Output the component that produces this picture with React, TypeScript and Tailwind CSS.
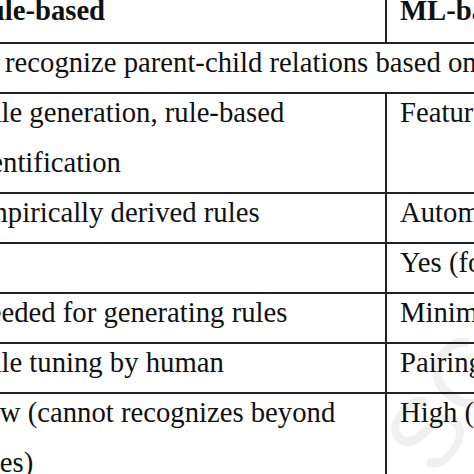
import * as React from "react";

type Row = {
  left?: React.ReactNode;
  right?: string;
  lines?: number;
  span?: string;
  header?: boolean;
};

const rows: Row[] = [
  { left: "Rule-based", right: "ML-based", header: true },
  { span: "To recognize parent-child relations based on features" },
  {
    left: (
      <>
        Rule generation, rule-based
        <br />
        identification
      </>
    ),
    right: "Feature extraction, classification",
    lines: 2,
  },
  { left: "Empirically derived rules", right: "Automatically learned" },
  { left: "", right: "Yes (for training data)" },
  { left: "Needed for generating rules", right: "Minimal" },
  { left: "Rule tuning by human", right: "Pairing data" },
  {
    left: (
      <>
        Low (cannot recognizes beyond
        <br />
        rules)
      </>
    ),
    right: "High (can generalize)",
    lines: 2,
  },
];

export default function App() {
  return (
    <div
      className="relative w-[474px] h-[474px] overflow-hidden bg-white text-[#111]"
      style={{ fontFamily: '"Liberation Serif", "Times New Roman", serif' }}
    >
      {/* faint watermark */}
      <div
        className="pointer-events-none absolute left-[378px] top-[352px] -rotate-[55deg] text-[100px] leading-none text-[#f0f0f0] select-none"
        style={{ fontFamily: '"Liberation Sans", Arial, sans-serif' }}
      >
        SC
      </div>

      <div className="relative -ml-[45px] -mt-[8px] w-[900px] text-[28.7px] leading-[50px]">
        {rows.map((row, idx) => {
          const height = row.lines === 2 ? "h-[100px]" : "h-[50px]";
          const border = idx === 0 ? "" : "border-t-2 border-[#222]";
          if (row.span) {
            return (
              <div key={idx} className={`flex box-border ${height} ${border}`}>
                <div className="pl-[13px] whitespace-nowrap -translate-y-[7px]">
                  {row.span}
                </div>
              </div>
            );
          }
          return (
            <div key={idx} className={`flex box-border ${height} ${border}`}>
              <div
                className={`w-[430px] shrink-0 pl-[13px] -translate-y-[7px] ${
                  row.header ? "font-bold" : ""
                }`}
              >
                {row.left}
              </div>
              <div className="flex-1 border-l-2 border-[#222]">
                <div
                  className={`pl-[13px] whitespace-nowrap -translate-y-[7px] ${
                    row.header ? "font-bold" : ""
                  }`}
                >
                  {row.right}
                </div>
              </div>
            </div>
          );
        })}
      </div>
    </div>
  );
}
